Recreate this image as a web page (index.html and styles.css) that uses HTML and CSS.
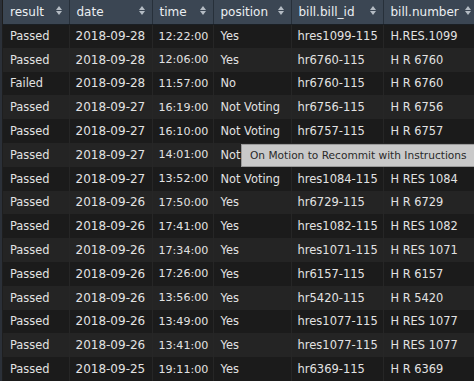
FILE: index.html
```html
<!DOCTYPE html>
<html>
<head>
<meta charset="utf-8">
<link rel="stylesheet" href="styles.css">
</head>
<body>
<div class="viewer">
  <table class="grid">
    <colgroup>
      <col class="c-result"><col class="c-date"><col class="c-time"><col class="c-pos"><col class="c-id"><col class="c-num">
    </colgroup>
    <thead>
      <tr>
        <th><span>result</span><i class="sort"></i></th>
        <th><span>date</span><i class="sort"></i></th>
        <th><span>time</span><i class="sort"></i></th>
        <th><span>position</span><i class="sort"></i></th>
        <th><span>bill.bill_id</span><i class="sort"></i></th>
        <th><span>bill.number</span><i class="sort"></i></th>
      </tr>
    </thead>
    <tbody>
      <tr><td>Passed</td><td class="d">2018-09-28</td><td class="t">12:22:00</td><td>Yes</td><td class="id">hres1099-115</td><td>H.RES.1099</td></tr>
      <tr><td>Passed</td><td class="d">2018-09-28</td><td class="t">12:06:00</td><td>Yes</td><td class="id">hr6760-115</td><td>H R 6760</td></tr>
      <tr><td>Failed</td><td class="d">2018-09-28</td><td class="t">11:57:00</td><td>No</td><td class="id">hr6760-115</td><td>H R 6760</td></tr>
      <tr><td>Passed</td><td class="d">2018-09-27</td><td class="t">16:19:00</td><td>Not Voting</td><td class="id">hr6756-115</td><td>H R 6756</td></tr>
      <tr><td>Passed</td><td class="d">2018-09-27</td><td class="t">16:10:00</td><td>Not Voting</td><td class="id">hr6757-115</td><td>H R 6757</td></tr>
      <tr><td>Passed</td><td class="d">2018-09-27</td><td class="t">14:01:00</td><td>Not Voting</td><td class="id">hres1082-115</td><td>H RES 1082</td></tr>
      <tr><td>Passed</td><td class="d">2018-09-27</td><td class="t">13:52:00</td><td>Not Voting</td><td class="id">hres1084-115</td><td>H RES 1084</td></tr>
      <tr><td>Passed</td><td class="d">2018-09-26</td><td class="t">17:50:00</td><td>Yes</td><td class="id">hr6729-115</td><td>H R 6729</td></tr>
      <tr><td>Passed</td><td class="d">2018-09-26</td><td class="t">17:41:00</td><td>Yes</td><td class="id">hres1082-115</td><td>H RES 1082</td></tr>
      <tr><td>Passed</td><td class="d">2018-09-26</td><td class="t">17:34:00</td><td>Yes</td><td class="id">hres1071-115</td><td>H RES 1071</td></tr>
      <tr><td>Passed</td><td class="d">2018-09-26</td><td class="t">17:26:00</td><td>Yes</td><td class="id">hr6157-115</td><td>H R 6157</td></tr>
      <tr><td>Passed</td><td class="d">2018-09-26</td><td class="t">13:56:00</td><td>Yes</td><td class="id">hr5420-115</td><td>H R 5420</td></tr>
      <tr><td>Passed</td><td class="d">2018-09-26</td><td class="t">13:49:00</td><td>Yes</td><td class="id">hres1077-115</td><td>H RES 1077</td></tr>
      <tr><td>Passed</td><td class="d">2018-09-26</td><td class="t">13:41:00</td><td>Yes</td><td class="id">hres1077-115</td><td>H RES 1077</td></tr>
      <tr><td>Passed</td><td class="d">2018-09-25</td><td class="t">19:11:00</td><td>Yes</td><td class="id">hr6369-115</td><td>H R 6369</td></tr>
    </tbody>
  </table>
  <div class="tooltip">On Motion to Recommit with Instructions</div>
</div>
</body>
</html>
```

FILE: styles.css
```css
html, body {
  margin: 0;
  padding: 0;
  background: #1e1e1e;
  overflow: hidden;
}
body {
  width: 474px;
  height: 381px;
}
.viewer {
  position: relative;
  width: 474px;
  height: 381px;
  overflow: hidden;
  border-left: 2px solid #2b3038;
  box-sizing: border-box;
  padding-left: 1px;
  background: #1e1e1e;
}
.grid {
  border-collapse: collapse;
  table-layout: fixed;
  width: 475px;
  font-family: "DejaVu Sans", sans-serif;
  font-size: 11.4px;
  color: #e2e2e2;
}
.c-result { width: 66px; }
.c-date { width: 83px; }
.c-time { width: 61px; }
.c-pos { width: 78px; }
.c-id { width: 92px; }
.c-num { width: 95px; }

th {
  position: relative;
  height: 24px;
  padding: 0 7px;
  background: #3b4653;
  border-right: 1px solid #27303a;
  border-bottom: 1px solid #1a1f24;
  text-align: left;
  font-weight: normal;
  font-size: 12px;
  color: #eceff2;
  box-sizing: border-box;
  white-space: nowrap;
}
.sort {
  position: absolute;
  right: 7px;
  top: 6px;
  width: 6px;
  height: 10px;
}
.sort::before, .sort::after {
  content: "";
  position: absolute;
  left: 0;
  border-left: 3px solid transparent;
  border-right: 3px solid transparent;
}
.sort::before {
  top: 0;
  border-bottom: 4px solid #b5bcc4;
}
.sort::after {
  top: 5px;
  border-top: 4px solid #b5bcc4;
}
td {
  height: 23.8px;
  padding: 0 7px;
  border-right: 1px solid #262626;
  white-space: nowrap;
  overflow: hidden;
  box-sizing: border-box;
}
tbody tr:nth-child(odd) td { background: #1b1b1b; }
tbody tr:nth-child(even) td { background: #242424; }
td.d { font-size: 12px; padding-left: 6px; }
td.t { font-size: 11.1px; padding-left: 6px; }
td.id { padding-left: 6px; font-size: 11.5px; }

.tooltip {
  position: absolute;
  left: 239px;
  top: 144px;
  height: 23px;
  width: 250px;
  box-sizing: border-box;
  padding: 0 0 0 8px;
  background: #c9c9c9;
  border: 1px solid #9a9a9a;
  color: #2a2a2a;
  font-family: "DejaVu Sans", sans-serif;
  font-size: 10.6px;
  line-height: 21px;
  white-space: nowrap;
}
```
